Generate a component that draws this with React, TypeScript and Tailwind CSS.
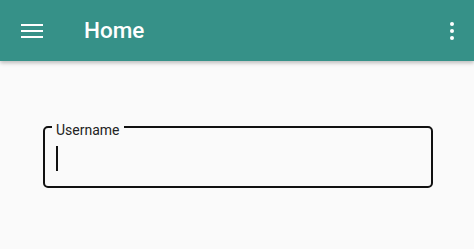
import { useState } from "react";

export default function App() {
  const [username, setUsername] = useState("");

  return (
    <div className="w-[474px] h-[249px] bg-[#fafafa] overflow-hidden font-['Roboto',sans-serif]">
      <header className="h-[61px] bg-[#369188] shadow-[0_2px_4px_rgba(0,0,0,0.25)] flex items-center relative z-10">
        <button className="ml-[21px] w-[22px] flex flex-col gap-[4px]" aria-label="menu">
          <span className="block h-[2px] bg-white" />
          <span className="block h-[2px] bg-white" />
          <span className="block h-[2px] bg-white" />
        </button>
        <h1 className="ml-[41px] text-white text-[22.5px] font-medium leading-none">Home</h1>
        <button className="ml-auto mr-[20px] flex flex-col gap-[3px]" aria-label="more">
          <span className="block w-[4px] h-[4px] rounded-full bg-white" />
          <span className="block w-[4px] h-[4px] rounded-full bg-white" />
          <span className="block w-[4px] h-[4px] rounded-full bg-white" />
        </button>
      </header>

      <main className="pt-[59px] pl-[43px] pr-[41px]">
        <fieldset className="h-[68px] border-2 border-[#111] rounded-[5px] px-[7px] pt-0">
          <legend className="px-[4px] text-[14px] leading-none text-[#222]">
            <span className="relative top-[3px]">Username</span>
          </legend>
          <div className="flex items-center h-[48px] pl-[4px]">
            <span className="w-[2px] h-[25px] bg-[#111]" />
            <input
              value={username}
              onChange={(e) => setUsername(e.target.value)}
              className="flex-1 bg-transparent outline-none text-[16px]"
            />
          </div>
        </fieldset>
      </main>
    </div>
  );
}
